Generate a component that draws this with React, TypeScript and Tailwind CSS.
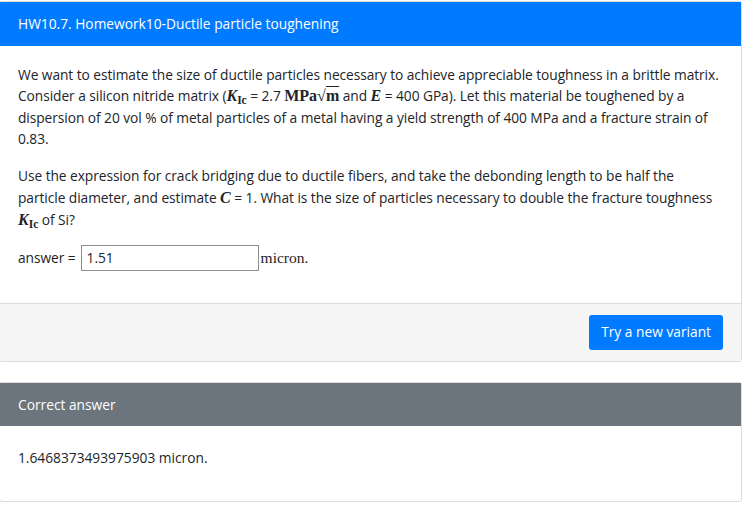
import type { ReactNode } from 'react'

// Carte de question type PrairieLearn (Bootstrap 4 à 90 %)
const sans = "font-['Open_Sans','Noto_Sans',sans-serif]"
const serif = "font-['Liberation_Serif','DejaVu_Serif',serif]"

function K() {
  return (
    <span className={`${serif} text-[16px] leading-[0] whitespace-nowrap tracking-normal`}>
      <i className="font-bold">K</i>
      <span className="relative top-[3px] text-[11.5px] font-bold">Ic</span>
    </span>
  )
}

function M({ children }: { children: ReactNode }) {
  return <span className={`${serif} text-[16px] leading-[0] tracking-normal`}>{children}</span>
}

export default function App() {
  return (
    <div className={`${sans} w-[743px] h-[505px] overflow-hidden bg-white text-[13.75px] leading-[21.6px] text-[#212529]`}>
      <div className="-ml-px mt-px w-[743px] rounded-[3px] border border-[#dcdcdc]">
        <div className="bg-[#007bff] px-[18px] py-[11px] text-white">HW10.7. Homework10-Ductile particle toughening</div>
        <div className="p-[18px] tracking-[-0.06px]">
          <p className="mb-[14.4px]">
            We want to estimate the size of ductile particles necessary to achieve appreciable toughness in a brittle matrix.
            Consider a silicon nitride matrix (<K /> = 2.7{' '}
            <M>
              <b>MPa</b>
              <b>√</b>
              <b className="overline">m</b>
            </M>{' '}
            and <M><i className="font-bold">E</i></M> = 400 GPa). Let this material be toughened by a dispersion of 20 vol % of
            metal particles of a metal having a yield strength of 400 MPa and a fracture strain of 0.83.
          </p>
          <p className="mb-[14.4px] pt-px">
            Use the expression for crack bridging due to ductile fibers, and take the debonding length to be half the particle
            diameter, and estimate <M><i className="font-bold">C</i></M> = 1. What is the size of particles necessary to double the
            fracture toughness <K /> of Si?
          </p>
          <div className="flex items-center">
            <span>answer =</span>
            <span className="ml-[5px] flex h-[26px] w-[178px] items-center border border-[#8f8f8f] px-[5px]">1.51</span>
            <span className={`${serif} ml-[2px] text-[15.5px] tracking-normal`}>micron.</span>
          </div>
          <div className="h-[14.4px]" />
        </div>
        <div className="flex justify-end border-t border-[#dcdcdc] bg-[#f5f5f5] px-[18px] py-[11px]">
          <button type="button" className="rounded-[3px] bg-[#007bff] px-[12px] py-[6.5px] text-white">
            Try a new variant
          </button>
        </div>
      </div>

      <div className="-ml-px mt-[20px] w-[743px] rounded-[3px] border border-[#dcdcdc]">
        <div className="bg-[#6c757d] px-[18px] py-[11px] text-white">Correct answer</div>
        <div className="px-[18px] pt-[21px] pb-[18px]">
          <p className="mb-[14.4px]">1.6468373493975903 micron.</p>
        </div>
      </div>
    </div>
  )
}
